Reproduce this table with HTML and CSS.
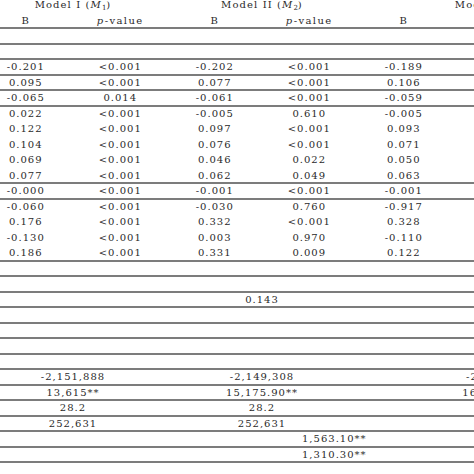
FILE: index.html
```html
<!DOCTYPE html>
<html>
<head>
<meta charset="utf-8">
<link rel="stylesheet" href="styles.css">
</head>
<body>
<div class="page">
  <div class="table">
    <div class="row head first">
      <div class="cell span2">Model I (<i>M</i><sub>1</sub>)</div>
      <div class="cell span2">Model II (<i>M</i><sub>2</sub>)</div>
      <div class="cell span3">Model III (<i>M</i><sub>3</sub>)</div>
    </div>
    <div class="row line head">
      <div class="cell">B</div><div class="cell"><i>p</i>-value</div>
      <div class="cell">B</div><div class="cell"><i>p</i>-value</div>
      <div class="cell">B</div>
    </div>
    <div class="row line"></div>
    <div class="row line"></div>
    <div class="row line">
      <div class="cell">-0.201</div><div class="cell">&lt;0.001</div><div class="cell">-0.202</div><div class="cell">&lt;0.001</div><div class="cell">-0.189</div>
    </div>
    <div class="row line">
      <div class="cell">0.095</div><div class="cell">&lt;0.001</div><div class="cell">0.077</div><div class="cell">&lt;0.001</div><div class="cell">0.106</div>
    </div>
    <div class="row line">
      <div class="cell">-0.065</div><div class="cell">0.014</div><div class="cell">-0.061</div><div class="cell">&lt;0.001</div><div class="cell">-0.059</div>
    </div>
    <div class="row">
      <div class="cell">0.022</div><div class="cell">&lt;0.001</div><div class="cell">-0.005</div><div class="cell">0.610</div><div class="cell">-0.005</div>
    </div>
    <div class="row">
      <div class="cell">0.122</div><div class="cell">&lt;0.001</div><div class="cell">0.097</div><div class="cell">&lt;0.001</div><div class="cell">0.093</div>
    </div>
    <div class="row">
      <div class="cell">0.104</div><div class="cell">&lt;0.001</div><div class="cell">0.076</div><div class="cell">&lt;0.001</div><div class="cell">0.071</div>
    </div>
    <div class="row">
      <div class="cell">0.069</div><div class="cell">&lt;0.001</div><div class="cell">0.046</div><div class="cell">0.022</div><div class="cell">0.050</div>
    </div>
    <div class="row line">
      <div class="cell">0.077</div><div class="cell">&lt;0.001</div><div class="cell">0.062</div><div class="cell">0.049</div><div class="cell">0.063</div>
    </div>
    <div class="row line">
      <div class="cell">-0.000</div><div class="cell">&lt;0.001</div><div class="cell">-0.001</div><div class="cell">&lt;0.001</div><div class="cell">-0.001</div>
    </div>
    <div class="row">
      <div class="cell">-0.060</div><div class="cell">&lt;0.001</div><div class="cell">-0.030</div><div class="cell">0.760</div><div class="cell">-0.917</div>
    </div>
    <div class="row">
      <div class="cell">0.176</div><div class="cell">&lt;0.001</div><div class="cell">0.332</div><div class="cell">&lt;0.001</div><div class="cell">0.328</div>
    </div>
    <div class="row">
      <div class="cell">-0.130</div><div class="cell">&lt;0.001</div><div class="cell">0.003</div><div class="cell">0.970</div><div class="cell">-0.110</div>
    </div>
    <div class="row line">
      <div class="cell">0.186</div><div class="cell">&lt;0.001</div><div class="cell">0.331</div><div class="cell">0.009</div><div class="cell">0.122</div>
    </div>
    <div class="row line"></div>
    <div class="row line"></div>
    <div class="row line">
      <div class="cell span2"></div><div class="cell span2">0.143</div>
    </div>
    <div class="row line"></div>
    <div class="row line"></div>
    <div class="row line"></div>
    <div class="row line"></div>
    <div class="row line">
      <div class="cell span2">-2,151,888</div><div class="cell span2">-2,149,308</div><div class="cell span3">-2,145,902</div>
    </div>
    <div class="row line">
      <div class="cell span2">13,615**</div><div class="cell span2">15,175.90**</div><div class="cell span3">16,019.40**</div>
    </div>
    <div class="row line">
      <div class="cell span2">28.2</div><div class="cell span2">28.2</div>
    </div>
    <div class="row line">
      <div class="cell span2">252,631</div><div class="cell span2">252,631</div>
    </div>
    <div class="row line">
      <div class="cell wide">1,563.10**</div>
    </div>
    <div class="row line">
      <div class="cell wide">1,310.30**</div>
    </div>
    <div class="row"></div>
  </div>
</div>
</body>
</html>
```

FILE: styles.css
```css
html, body {
  margin: 0;
  padding: 0;
  background: #ffffff;
}

.page {
  width: 474px;
  height: 474px;
  overflow: hidden;
  background: #ffffff;
}

.table {
  width: 661.5px;
  margin-left: -22px;
  margin-top: -2px;
  font-family: "DejaVu Serif", "Liberation Serif", serif;
  font-size: 10px;
  letter-spacing: 1px;
  color: #2a2a2a;
}

.row {
  display: grid;
  grid-template-columns: repeat(7, 94.5px);
  height: 15.5px;
  box-sizing: border-box;
  border-bottom: 2px solid transparent;
}

.row.line {
  border-bottom-color: #7c7c7c;
}

.cell {
  line-height: 13.5px;
  height: 13.5px;
  text-align: center;
  white-space: nowrap;
  padding-left: 1px;
}

.span2 {
  grid-column: span 2;
}

.span3 {
  grid-column: span 3;
}

.wide {
  grid-column: 1 / -1;
  text-align: left;
  padding-left: 324px;
}

.head .cell {
  letter-spacing: 1.4px;
}

.first .cell {
  letter-spacing: 1.1px;
}

sub {
  font-size: 7px;
  line-height: 0;
  vertical-align: -2px;
  letter-spacing: 0;
}

i {
  font-style: italic;
}
```
